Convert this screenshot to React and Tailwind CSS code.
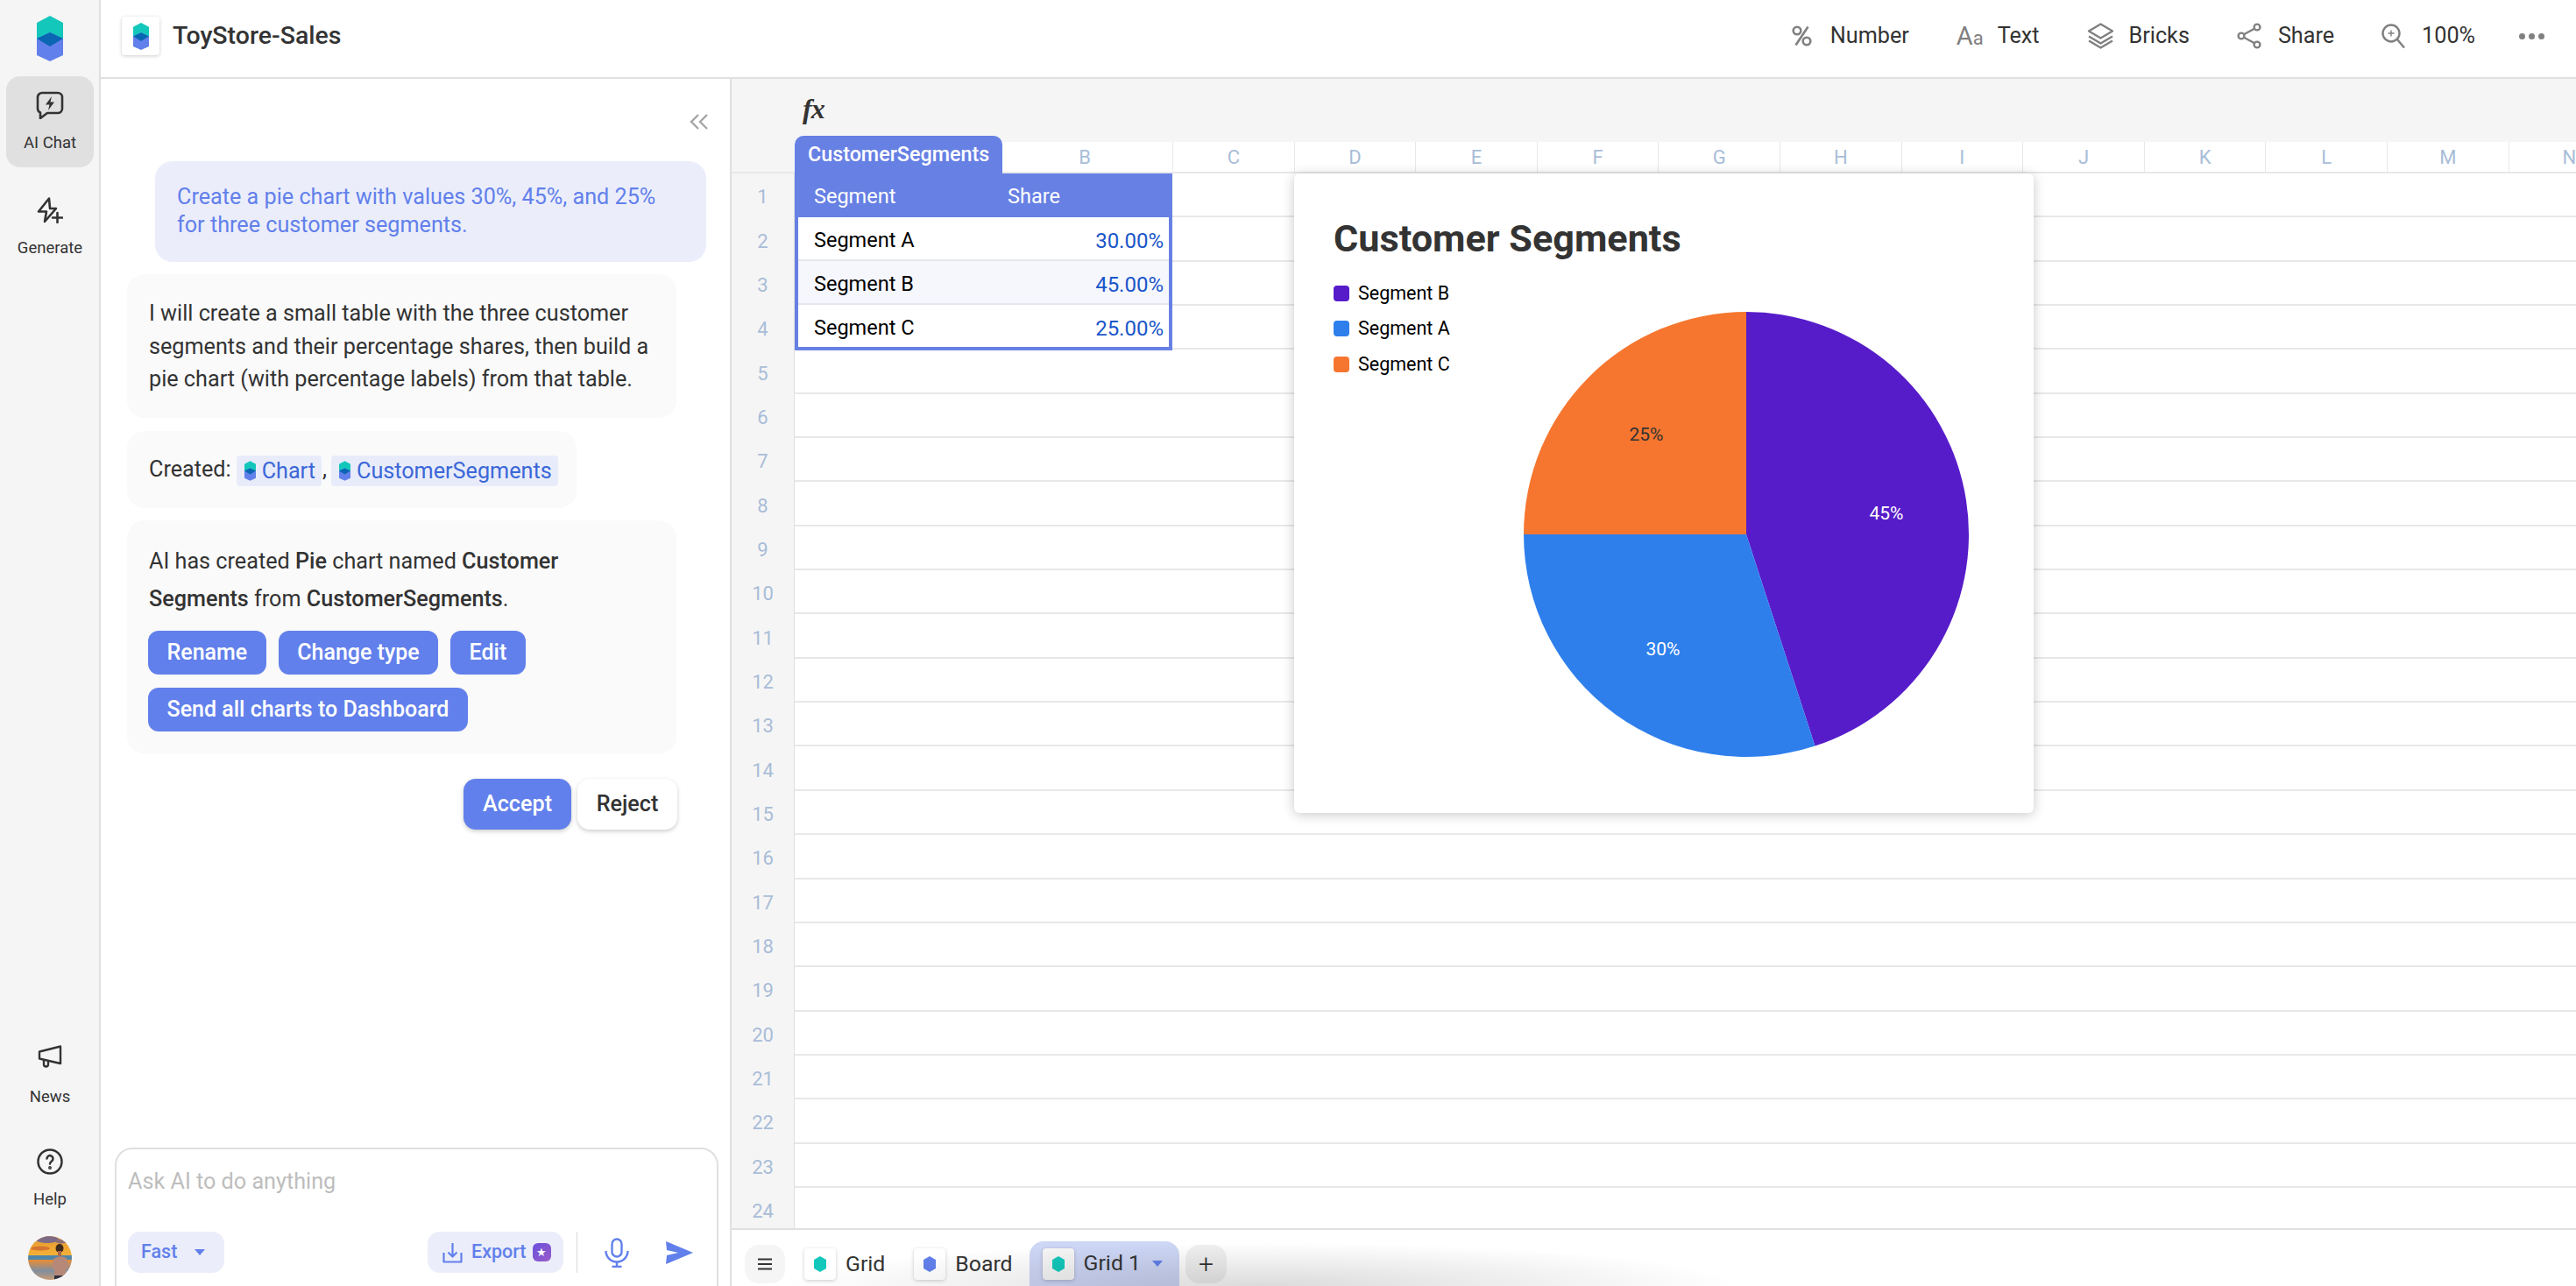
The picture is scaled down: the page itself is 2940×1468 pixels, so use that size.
import React from "react";

const Hex = ({ c, w = 14, h = 18 }) => (
  <svg width={w} height={h} viewBox="0 0 14 18"><polygon points="7,0 14,4 14,14 7,18 0,14 0,4" fill={c} /></svg>
);

const Logo = ({ w = 30, h = 52 }) => (
  <svg width={w} height={h} viewBox="0 0 30 52">
    <polygon points="15,0 30,8 30,26 15,35 0,26 0,8" fill="#14c7bb" />
    <polygon points="0,26 15,19 30,26 30,45 15,52 0,45" fill="#6280eb" />
    <polygon points="15,19 30,26 15,35 0,26" fill="#0a66b2" />
  </svg>
);

const IconChat = () => (
  <svg width="32" height="32" viewBox="0 0 32 32" fill="none">
    <path d="M7 2h18a5 5 0 0 1 5 5v13a5 5 0 0 1-5 5H13l-8 6v-6.500A5 5 0 0 1 2 20V7a5 5 0 0 1 5-5z" stroke="#333" strokeWidth="2.600" strokeLinejoin="round" />
    <path d="M18 6l-7 9.500h4.500L14 22l7-9.500h-4.500z" fill="#333" />
  </svg>
);
const IconGen = () => (
  <svg width="30" height="30" viewBox="0 0 30 30" fill="none" stroke="#333" strokeWidth="2.600" strokeLinejoin="round">
    <path d="M14 1.500 2 16.500h9L9 28l13-15h-7z" />
    <path d="M23.500 18v11M18 23.500h11" strokeLinecap="round" />
  </svg>
);
const IconNews = () => (
  <svg width="28" height="32" viewBox="0 0 28 32" fill="none" stroke="#333" strokeWidth="2.400" strokeLinejoin="round">
    <path d="M2 7.500 26 1.500v19.500L2 15.500z" />
    <path d="M7 16.500v5.500a2.500 2.500 0 0 0 5 0V18" />
  </svg>
);
const IconHelp = () => (
  <svg width="30" height="30" viewBox="0 0 30 30" fill="none" stroke="#333" strokeWidth="2.500">
    <circle cx="15" cy="15" r="13.500" />
    <path d="M11.500 11.500a3.500 3.500 0 1 1 5.500 3c-1.300.9-2 1.600-2 3" strokeLinecap="round" />
    <circle cx="15" cy="22" r="0.700" fill="#333" />
  </svg>
);
const Avatar = () => (
  <svg width="50" height="50" viewBox="0 0 50 50">
    <defs>
      <clipPath id="av"><circle cx="25" cy="25" r="25" /></clipPath>
      <linearGradient id="sky" x1="0" y1="0" x2="0" y2="1">
        <stop offset="0" stopColor="#d99a3e" /><stop offset="0.5" stopColor="#eea531" /><stop offset="1" stopColor="#f6b23a" />
      </linearGradient>
      <linearGradient id="sand" x1="0" y1="0" x2="0" y2="1">
        <stop offset="0" stopColor="#e98d35" /><stop offset="0.55" stopColor="#7f8ea0" /><stop offset="1" stopColor="#c89a72" />
      </linearGradient>
    </defs>
    <g clipPath="url(#av)">
      <rect width="50" height="23" fill="url(#sky)" />
      <ellipse cx="22" cy="4" rx="13" ry="4" fill="#7d6a86" />
      <ellipse cx="38" cy="6" rx="7" ry="2.500" fill="#8c6f74" />
      <ellipse cx="14" cy="14" rx="11" ry="2.500" fill="#d5752f" />
      <rect y="22" width="50" height="6" fill="#4f86a8" />
      <rect y="27" width="50" height="23" fill="url(#sand)" />
      <ellipse cx="36" cy="14" rx="4.500" ry="5" fill="#3f2a1e" />
      <rect x="34" y="17" width="4" height="6" fill="#a9694c" />
      <path d="M29 26q7-5 15-1l3 12-4 1 1 12H31l-1-12-2-2z" fill="#b68878" />
      <rect x="30" y="45" width="11" height="5" fill="#2c3140" />
    </g>
  </svg>
);

const Nav = ({ icon, label, active, className = "" }) => (
  <div className={`mx-[7px] flex h-[104px] w-[100px] flex-col items-center rounded-2xl pt-[17px] ${active ? "bg-[#e0e0e0]" : ""} ${className}`}>
    <div className="flex h-[32px] items-center justify-center">{icon}</div>
    <div className="mt-[15px] text-[18.500px] leading-[24px] text-[#333]">{label}</div>
  </div>
);

const Tool = ({ icon, label, gap = "gap-[21px]" }) => (
  <div className={`flex items-center ${gap}`}>
    {icon}
    <span className="text-[25.200px] leading-none text-[#333]">{label}</span>
  </div>
);
const IconPercent = () => (
  <svg width="23" height="24" viewBox="0 0 23 24" fill="none" stroke="#808080" strokeWidth="2.600">
    <circle cx="6" cy="6" r="4.300" /><circle cx="17" cy="18" r="4.300" /><path d="M18.500 1.500 4.500 22.500" />
  </svg>
);
const IconLayers = () => (
  <svg width="31" height="30" viewBox="0 0 31 30" fill="none" stroke="#808080" strokeWidth="2.400" strokeLinejoin="round">
    <path d="M15.500 1.500 29 9.500 15.500 17.500 2 9.500z" />
    <path d="M2 15.500l13.500 8 13.500-8M2 20.500l13.500 8 13.500-8" />
  </svg>
);
const IconShare = () => (
  <svg width="28" height="30" viewBox="0 0 28 30" fill="none" stroke="#808080" strokeWidth="2.400">
    <circle cx="23" cy="5" r="3.400" /><circle cx="5" cy="15" r="3.400" /><circle cx="23" cy="25" r="3.400" />
    <path d="M8 13.300 20 6.700M8 16.700 20 23.300" />
  </svg>
);
const IconZoom = () => (
  <svg width="27" height="28" viewBox="0 0 27 28" fill="none" stroke="#808080" strokeWidth="2.400">
    <circle cx="11" cy="11" r="9.500" /><path d="M18 18l8 9.500" />
    <path d="M11 7.500v7M7.500 11h7" strokeWidth="1.400" />
  </svg>
);

const Chip = ({ label }) => (
  <span className="inline-flex h-[35px] items-center gap-[7px] rounded bg-[#e8ecfa] pl-[9px] pr-[7px] align-middle text-[#3b67d8]">
    <Logo w={13} h={23} />
    {label}
  </span>
);

const Btn = ({ children }) => (
  <button className="h-[50px] rounded-xl bg-[#6280eb] px-[21.500px] text-[25px] font-medium text-white">{children}</button>
);

const Tab = ({ c, label, active, caret }) => (
  <div className={`flex items-center ${active ? "h-[51px] rounded-t-2xl bg-[#cdd6f5] pl-[15px] pr-[19px]" : "h-[44px]"}`}>
    <div className={`flex h-[36px] w-[36px] items-center justify-center rounded shadow-[0_1px_4px_rgba(0,0,0,0.2)] ${active ? "bg-[#f5f5f5]" : "bg-white"}`}>
      <Hex c={c} />
    </div>
    <span className="ml-[11px] text-[24.800px] leading-none text-[#333]">{label}</span>
    {caret && <span className="ml-[13px] h-0 w-0 border-x-[6px] border-t-[7px] border-x-transparent border-t-[#6280eb]" />}
  </div>
);

const cols = ["C", "D", "E", "F", "G", "H", "I", "J", "K", "L", "M", "N"];
const rows = Array.from({ length: 24 }, (_, i) => i + 1);

function polar(cx, cy, r, f) {
  const a = f * 2 * Math.PI - Math.PI / 2;
  return [cx + r * Math.cos(a), cy + r * Math.sin(a)];
}
function slice(cx, cy, r, from, to) {
  const [x1, y1] = polar(cx, cy, r, from);
  const [x2, y2] = polar(cx, cy, r, to);
  return `M${cx} ${cy}L${x1} ${y1}A${r} ${r} 0 ${to - from > 0.5 ? 1 : 0} 1 ${x2} ${y2}Z`;
}

const Pie = () => (
  <svg width="512" height="512" viewBox="0 0 512 512" className="shrink-0">
    <path d={slice(256, 256, 254, 0, 0.45)} fill="#571cc9" />
    <path d={slice(256, 256, 254, 0.45, 0.75)} fill="#2e7fec" />
    <path d={slice(256, 256, 254, 0.75, 1)} fill="#f6762f" />
    <text x="416" y="239" textAnchor="middle" fontSize="21" fill="#fff">45%</text>
    <text x="161" y="394" textAnchor="middle" fontSize="21" fill="#fff">30%</text>
    <text x="142" y="149" textAnchor="middle" fontSize="21" fill="#333">25%</text>
  </svg>
);

const Legend = ({ c, label }) => (
  <div className="flex h-[19px] items-center gap-[10px]">
    <span className="h-[18px] w-[18px] rounded-[4px]" style={{ background: c }} />
    <span className="text-[21.500px] leading-none text-black">{label}</span>
  </div>
);

const TRow = ({ name, v, alt, last }) => (
  <div className={`flex items-center justify-between pl-[18px] pr-[6px] pt-[5px] ${last ? "h-[48px]" : "h-[50px] border-b-2 border-[#e6e6ee]"} ${alt ? "bg-[#f6f7fd]" : "bg-white"}`}>
    <span className="text-[23.500px] text-black">{name}</span>
    <span className="text-[24px] text-[#1a56c9]">{v}</span>
  </div>
);

export default function App() {
  return (
    <div className="flex h-[1468px] w-[2940px] overflow-hidden bg-white [font-family:Roboto,sans-serif]">
      <aside className="flex w-[115px] shrink-0 flex-col border-r-2 border-[#e0e0e0] bg-[#f5f5f5]">
        <div className="flex h-[87px] justify-center pt-[18px]"><Logo /></div>
        <Nav icon={<IconChat />} label="AI Chat" active />
        <Nav icon={<IconGen />} label="Generate" className="mt-[16px]" />
        <div className="flex-1" />
        <Nav icon={<IconNews />} label="News" />
        <Nav icon={<IconHelp />} label="Help" className="mt-[13px]" />
        <div className="mb-[7px] mt-[14px] flex justify-center"><Avatar /></div>
      </aside>

      <div className="flex min-w-0 flex-1 flex-col">
        <header className="flex h-[90px] shrink-0 items-center border-b-2 border-[#e0e0e0] pb-[6px] pl-[24px] pr-[36px]">
          <div className="flex h-[44px] w-[43px] items-center justify-center rounded bg-white shadow-[0_1px_4px_rgba(0,0,0,0.2)]">
            <Logo w={18} h={33} />
          </div>
          <span className="ml-[15px] text-[28.500px] font-medium text-[#333]">ToyStore-Sales</span>
          <div className="flex-1" />
          <div className="flex items-center gap-[54px]">
            <Tool icon={<IconPercent />} label="Number" />
            <Tool icon={<span className="whitespace-nowrap text-[29px] leading-none text-[#808080]">A<span className="text-[22px]">a</span></span>} label="Text" gap="gap-[16px]" />
            <Tool icon={<IconLayers />} label="Bricks" gap="gap-[17px]" />
            <Tool icon={<IconShare />} label="Share" gap="gap-[19px]" />
            <Tool icon={<IconZoom />} label="100%" gap="gap-[19px]" />
            <div className="-ml-[4px] flex gap-[4px]">
              <span className="h-[7px] w-[7px] rounded-full bg-[#808080]" />
              <span className="h-[7px] w-[7px] rounded-full bg-[#808080]" />
              <span className="h-[7px] w-[7px] rounded-full bg-[#808080]" />
            </div>
          </div>
        </header>

        <div className="flex min-h-0 flex-1">
          <section className="flex w-[720px] shrink-0 flex-col border-r-2 border-[#e0e0e0] text-[25.200px] text-[#333]">
            <div className="flex justify-end pr-[24px] pt-[40px]">
              <svg width="22" height="18" viewBox="0 0 22 18" fill="none" stroke="#a6a6a6" strokeWidth="2.400"><path d="M10 1 2 9l8 8M20 1l-8 8 8 8" /></svg>
            </div>
            <div className="ml-[62px] mt-[36px] h-[115px] w-[629px] rounded-[20px] bg-[#ebeefa] px-[25px] pt-[25px] leading-[32px] text-[#6280eb]">
              Create a pie chart with values 30%, 45%, and 25% for three customer segments.
            </div>
            <div className="ml-[30px] mt-[14px] h-[164px] w-[627px] rounded-[20px] bg-[#fafafa] px-[25px] py-[26px] leading-[37.500px]">
              I will create a small table with the three customer segments and their percentage shares, then build a pie chart (with percentage labels) from that table.
            </div>
            <div className="ml-[30px] mt-[15px] flex h-[88px] w-[513px] items-center rounded-[20px] bg-[#fafafa] pl-[25px]">
              <span>Created:</span>
              <span className="ml-[6px]"><Chip label="Chart" /></span>
              <span className="mx-[1px]">,</span>
              <span className="ml-[4px]"><Chip label="CustomerSegments" /></span>
            </div>
            <div className="ml-[30px] mt-[14px] h-[266px] w-[627px] rounded-[20px] bg-[#fafafa] px-[25px] pt-[25px]">
              <p className="leading-[43px]">
                AI has created <b className="font-medium">Pie</b> chart named <b className="font-medium">Customer Segments</b> from <b className="font-medium">CustomerSegments</b>.
              </p>
              <div className="-ml-[1px] mt-[15px] flex w-[480px] flex-wrap gap-x-[14px] gap-y-[15px]">
                <Btn>Rename</Btn>
                <Btn>Change type</Btn>
                <Btn>Edit</Btn>
                <Btn>Send all charts to Dashboard</Btn>
              </div>
            </div>
            <div className="ml-[414px] mt-[29px] flex w-[244px] gap-[7px]">
              <button className="h-[58px] w-[123px] rounded-[14px] bg-[#6280eb] text-[25.200px] font-medium text-white shadow-[0_2px_5px_rgba(0,0,0,0.2)]">Accept</button>
              <button className="h-[58px] w-[114px] rounded-[14px] bg-white text-[25.200px] font-medium text-[#333] shadow-[0_2px_5px_rgba(0,0,0,0.2)]">Reject</button>
            </div>
            <div className="flex-1" />
            <div className="-mb-[40px] ml-[16px] h-[198px] w-[689px] shrink-0 rounded-[20px] border-2 border-[#e0e0e0] pl-[13px] pr-[27px] pt-[22px]">
              <div className="leading-[30px] text-[#bdbdbd]">Ask AI to do anything</div>
              <div className="mt-[42px] flex h-[47px] items-center">
                <div className="flex h-[47px] w-[110px] items-center rounded-[14px] bg-[#ebeefa] pl-[15px] text-[21.500px] font-medium text-[#6280eb]">
                  Fast
                  <span className="ml-[20px] h-0 w-0 border-x-[6px] border-t-[7px] border-x-transparent border-t-[#6280eb]" />
                </div>
                <div className="flex-1" />
                <div className="flex h-[47px] w-[155px] items-center rounded-[14px] bg-[#ebeefa] pl-[17px] text-[21.500px] font-medium text-[#6280eb]">
                  <svg width="23" height="24" viewBox="0 0 23 24" fill="none" stroke="#6280eb" strokeWidth="2.200" strokeLinejoin="round"><path d="M1.500 12v10.500h20V12M11.500 1v15M6.500 11.500l5 5 5-5" /></svg>
                  <span className="ml-[10px]">Export</span>
                  <span className="ml-[7px] flex h-[21px] w-[21px] items-center justify-center rounded-[6px] bg-gradient-to-br from-[#6a4fdc] to-[#9a5ac8] text-[13px] leading-none text-white">★</span>
                </div>
                <div className="ml-[15px] h-[47px] w-[1px] bg-[#d9d9d9]" />
                <svg className="ml-[31px]" width="28" height="34" viewBox="0 0 28 34" fill="none" stroke="#6280eb" strokeWidth="2.400"><rect x="8.500" y="1.500" width="11" height="20" rx="5.500" /><path d="M1.500 15a12.500 12.500 0 0 0 25 0M14 27.500v6M8.500 33h11" /></svg>
                <svg className="ml-[42px]" width="31" height="26" viewBox="0 0 31 26"><path d="M0 0l31 13L0 26l1-10 13-3L1 10z" fill="#6280eb" /></svg>
              </div>
            </div>
          </section>

          <main className="flex min-w-0 flex-1 flex-col bg-[#f5f5f5]">
            <div className="flex h-[72px] shrink-0 items-start pl-[81px] pt-[19px]">
              <span className="[font-family:'Liberation_Serif',serif] text-[32px] font-bold italic leading-[30px] tracking-[-1px] text-[#333]">fx</span>
            </div>
            <div className="relative min-h-0 flex-1">
              <div className="flex h-[36px] border-b-2 border-[#e8e8e8]">
                <div className="w-[72px] shrink-0" />
                <div className="flex w-[431px] shrink-0 justify-end bg-white">
                  <span className="w-[200px] text-center text-[22px] leading-[36px] text-[#a9bdd8]">B</span>
                </div>
                {cols.map((c) => (
                  <div key={c} className="w-[138.600px] shrink-0 border-l border-[#e8e8e8] bg-white text-center text-[22px] leading-[36px] text-[#a9bdd8]">{c}</div>
                ))}
              </div>
              <div className="h-[1204px] overflow-hidden">
                {rows.map((r) => (
                  <div key={r} className="flex h-[50.350px]">
                    <div className="flex w-[72px] shrink-0 items-center justify-center border-r border-[#e0e0e0] pt-[3px] text-[22px] text-[#a9bdd8]">{r}</div>
                    <div className="flex-1 border-b-2 border-[#e8e8e8] bg-white" />
                  </div>
                ))}
              </div>

              <div className="absolute left-[72px] top-[-7px] flex h-[43px] w-[237px] items-start rounded-t-[10px] bg-[#6780e4] pl-[15px] pt-[7px] text-[23.300px] font-medium leading-[28px] text-white">CustomerSegments</div>
              <div className="absolute left-[72px] top-[36px] w-[431px] border-x-4 border-b-4 border-[#6780e4] bg-white">
                <div className="-mx-[4px] flex h-[50px] items-center bg-[#6780e4] pl-[22px] pt-[3px] text-[23.500px] text-white">
                  <span className="w-[221px]">Segment</span><span>Share</span>
                </div>
                <TRow name="Segment A" v="30.00%" />
                <TRow name="Segment B" v="45.00%" alt />
                <TRow name="Segment C" v="25.00%" last />
              </div>

              <div className="absolute left-[642px] top-[36px] flex h-[730px] w-[844px] rounded-md bg-white pl-[45px] shadow-[0_2px_14px_rgba(0,0,0,0.22)]">
                <div className="w-[200px] shrink-0 pt-[47px]">
                  <div className="whitespace-nowrap text-[43.200px] font-bold leading-[56px] text-[#333]">Customer Segments</div>
                  <div className="mt-[24px] flex flex-col gap-[21.500px]">
                    <Legend c="#571cc9" label="Segment B" />
                    <Legend c="#2e7fec" label="Segment A" />
                    <Legend c="#f6762f" label="Segment C" />
                  </div>
                </div>
                <div className="ml-[15px] mt-[156px]"><Pie /></div>
              </div>
            </div>
            <div className="relative flex h-[66px] shrink-0 items-start border-t-2 border-[#e0e0e0] bg-white pl-[15px]">
              <div className="mt-[17px] flex h-[44px] w-[46px] items-center justify-center rounded-2xl bg-[#f5f5f5]">
                <svg width="16" height="14" viewBox="0 0 16 14" stroke="#333" strokeWidth="2.200"><path d="M0 1.500h16M0 7h16M0 12.500h16" /></svg>
              </div>
              <div className="ml-[22px] mt-[17px]"><Tab c="#14c7bb" label="Grid" /></div>
              <div className="ml-[33px] mt-[17px]"><Tab c="#6280eb" label="Board" /></div>
              <div className="ml-[19px] mt-[13px]"><Tab c="#14c7bb" label="Grid 1" active caret /></div>
              <div className="ml-[7px] mt-[17px] flex h-[44px] w-[47px] items-center justify-center rounded-2xl bg-[#f0f0f0] text-[30px] font-light leading-none text-[#333]">+</div>
              <div className="pointer-events-none absolute bottom-0 left-[60px] h-[64px] w-[1090px] bg-[radial-gradient(ellipse_545px_50px_at_50%_100%,rgba(0,0,0,0.14),transparent)]" />
            </div>
          </main>
        </div>
      </div>
    </div>
  );
}
